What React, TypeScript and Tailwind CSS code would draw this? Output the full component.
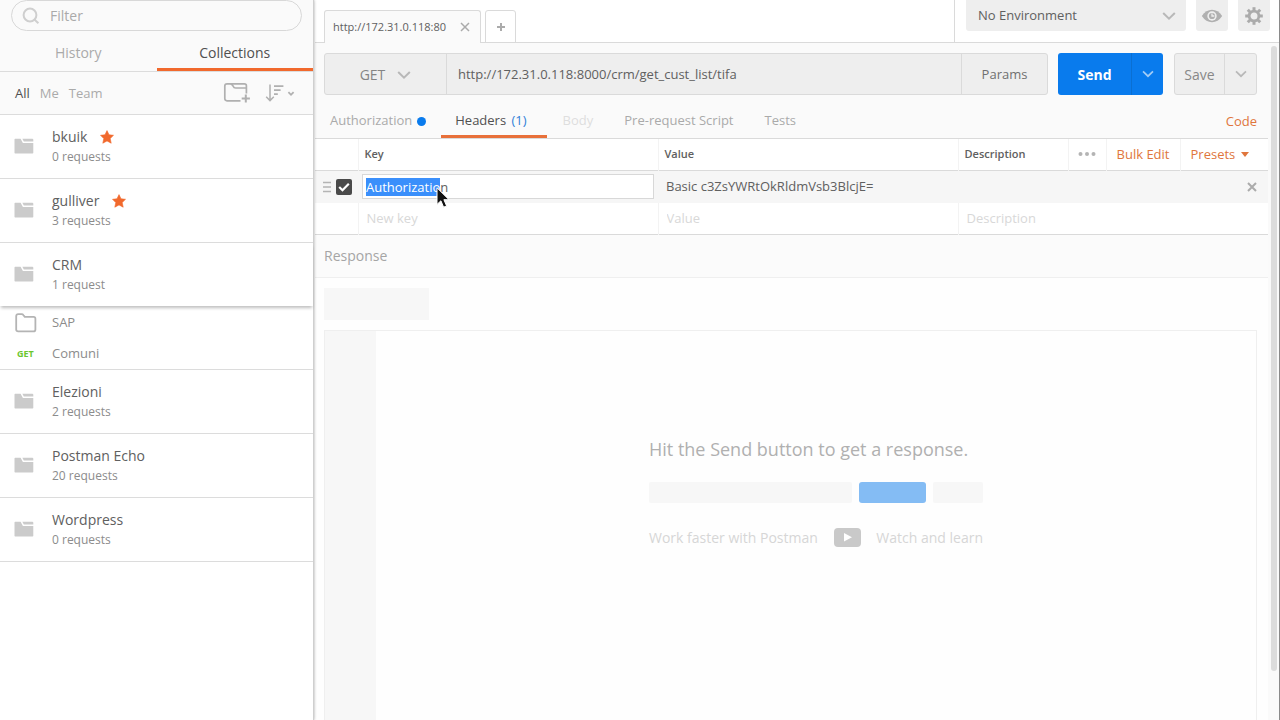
import { useEffect, useRef, type ReactNode } from "react";

function Chevron({ className }: { className?: string }) {
  return (
    <svg viewBox="0 0 14 8" width="14" height="8" className={className} fill="none" stroke="currentColor" strokeWidth="2" aria-hidden="true">
      <path d="M1.2 1 7 6.6 12.8 1" />
    </svg>
  );
}

function CollectionIcon() {
  return (
    <svg viewBox="0 0 20 16" width="20" height="16" className="mb-[2px]" fill="#cbcbcb" aria-hidden="true">
      <path d="M.5 1.5Q.5.8 1.2.8H6.6L8.9 5H19.3V14.8Q19.3 15.5 18.6 15.5H1.2Q.5 15.5.5 14.8Z" />
      <path d="M8.4.8H18.4Q19.3.8 19.3 1.7V3.4H9.8Z" />
    </svg>
  );
}

function FolderIcon() {
  return (
    <svg viewBox="0 0 22 20" width="22" height="20" fill="none" stroke="#b4b4b4" strokeWidth="1.8" strokeLinejoin="round" aria-hidden="true">
      <path d="M3.2 1.2H6.6Q7.8 1.2 8.5 2.2L9.8 3.9H18.6Q20.4 3.9 20.4 5.7V16.4Q20.4 18.4 18.4 18.4H3.2Q1.2 18.4 1.2 16.4V3.2Q1.2 1.2 3.2 1.2Z" />
    </svg>
  );
}

function NewFolderIcon() {
  return (
    <svg viewBox="0 0 28 22" width="28" height="22" fill="none" stroke="#b0b0b0" strokeWidth="1.7" aria-hidden="true">
      <path d="M17.5 18.8H4Q1.8 18.8 1.8 16.6V4Q1.8 1.8 4 1.8H21.4Q23.4 1.8 23.4 3.8V11.4" />
      <path d="M7.6 1.9Q9.6 2.4 10.2 4.2Q10.8 6 12.6 6H23" />
      <path d="M22.8 12.4V20.6M18.7 16.5H26.9" strokeWidth="2" />
    </svg>
  );
}

function SortIcon() {
  return (
    <svg viewBox="0 0 30 20" width="30" height="20" fill="none" stroke="#b0b0b0" strokeWidth="1.5" aria-hidden="true">
      <path d="M5 1.5V17.6M1.2 13.8 5 17.6 8.8 13.8" />
      <path d="M9 3.2H18.4M9 7.2H15.6M9 11.2H12.8" strokeWidth="1.8" />
      <path d="M23.4 9.2 26 11.8 28.6 9.2" strokeWidth="1.8" />
    </svg>
  );
}

function Star() {
  return (
    <svg viewBox="0 0 14 14" width="14" height="14" fill="#f1692d" stroke="#f1692d" strokeWidth=".6" strokeLinejoin="round" aria-label="Favorite" role="img">
      <path d="M7 .6 9 4.8 13.5 5.3 10.2 8.6 11.2 13.2 7 10.9 2.8 13.2 3.8 8.6.5 5.3 5 4.8Z" />
    </svg>
  );
}

function EyeIcon() {
  return (
    <svg viewBox="0 0 22 14" width="22" height="14" aria-hidden="true">
      <path d="M.8 7Q5 .8 11 .8T21.2 7Q17 13.2 11 13.2T.8 7Z" fill="#b0b0b0" />
      <circle cx="11" cy="7" r="4.7" fill="#eee" />
      <circle cx="11" cy="7" r="3.1" fill="#b0b0b0" />
      <path d="M11 4.6V7H13.4" stroke="#eee" strokeWidth="1.3" fill="none" />
    </svg>
  );
}

const TEETH = [0, 45, 90, 135, 180, 225, 270, 315];

function GearIcon() {
  return (
    <svg viewBox="0 0 18 18" width="18" height="18" fill="none" stroke="#ababab" aria-hidden="true">
      <circle cx="9" cy="9" r="4.9" strokeWidth="2.8" />
      {TEETH.map((a) => (
        <path key={a} d="M9 3.4V.2" strokeWidth="3" transform={`rotate(${a} 9 9)`} />
      ))}
    </svg>
  );
}

function Collection({ name, count, starred, open, children }: { name: string; count: string; starred?: boolean; open?: boolean; children?: ReactNode }) {
  return (
    <li className="border-b border-[#dcdcdc]">
      <div className={open ? "flex h-[63px] items-center pl-[14px] shadow-[0_3px_3px_-1px_rgba(0,0,0,0.25)]" : "flex h-[63px] items-center pl-[14px]"}>
        <CollectionIcon />
        <div className="ml-[18px]">
          <div className="flex h-5 items-center gap-[13px] text-sm text-[#606060]">
            {name}
            {starred && <Star />}
          </div>
          <div className="h-5 text-xs leading-5 text-[#8c8c8c]">{count}</div>
        </div>
      </div>
      {children}
    </li>
  );
}

function Sidebar() {
  return (
    <aside className="z-10 flex w-[314px] shrink-0 flex-col border-r border-[#cfcfcf] bg-white shadow-[0_0_3px_rgba(0,0,0,0.3)]">
      <div className="bg-[#fafafa]">
        <label className="mr-[11px] ml-[11px] flex h-[31px] items-center gap-[10px] rounded-full border border-[#d8d8d8] pl-[10px]">
          <svg viewBox="0 0 18 18" width="18" height="18" fill="none" stroke="#cfcfcf" strokeWidth="2" aria-hidden="true">
            <circle cx="8" cy="8" r="6.4" />
            <path d="M12.4 12.4 16.4 16.2" />
          </svg>
          <input aria-label="Filter" placeholder="Filter" className="min-w-0 flex-1 bg-transparent text-sm outline-none placeholder:text-[#aaa]" />
        </label>
        <div role="tablist" className="flex h-[41px] border-b border-[#dcdcdc] text-sm">
          <button role="tab" aria-selected="false" className="flex-1 border-b-3 border-transparent pt-[6px] text-[#aaa]">History</button>
          <button role="tab" aria-selected="true" className="flex-1 border-b-3 border-[#f1692d] pt-[6px] text-[#505050]">Collections</button>
        </div>
        <div className="flex h-[43px] items-center border-b border-[#dcdcdc] pr-[18px] pl-[15px] text-[13px] text-[#aaa]">
          <div className="flex gap-[10px] pt-px">
            <button className="text-[#505050]">All</button>
            <button>Me</button>
            <button>Team</button>
          </div>
          <div className="ml-auto flex items-center gap-[14px]">
            <button aria-label="New collection"><NewFolderIcon /></button>
            <button aria-label="Sort collections"><SortIcon /></button>
          </div>
        </div>
      </div>
      <ul>
        <Collection name="bkuik" count="0 requests" starred />
        <Collection name="gulliver" count="3 requests" starred />
        <Collection name="CRM" count="1 request" open>
          <ul className="pt-px text-[13px] text-[#8c8c8c]">
            <li className="flex h-[31px] items-center pl-[15px]">
              <FolderIcon />
              <span className="ml-[15px]">SAP</span>
            </li>
            <li className="flex h-[31px] items-center pl-[17px]">
              <span className="w-[35px] text-[9px] font-bold text-[#6bc72f]">GET</span>
              Comuni
            </li>
          </ul>
        </Collection>
        <Collection name="Elezioni" count="2 requests" />
        <Collection name="Postman Echo" count="20 requests" />
        <Collection name="Wordpress" count="0 requests" />
      </ul>
    </aside>
  );
}

function TopBar() {
  return (
    <header className="flex h-[43px] shrink-0 border-b border-[#dadada] bg-white">
      <div className="flex flex-1 items-end gap-1 border-r border-[#dadada] pl-[9px]">
        <div className="-mb-px flex h-[33px] w-[157px] items-center rounded-t-[3px] border border-b-0 border-[#dadada] bg-[#fafafa] pr-2 pl-2 text-[11px] text-[#606060]">
          <span className="w-[116px] overflow-hidden whitespace-nowrap">http://172.31.0.118:80</span>
          <button aria-label="Close tab" className="ml-auto p-[2px] text-[#ababab]">
            <svg viewBox="0 0 10 10" width="10" height="10" stroke="currentColor" strokeWidth="1.5" aria-hidden="true"><path d="M1 1 9 9M9 1 1 9" /></svg>
          </button>
        </div>
        <button aria-label="New tab" className="-mb-px flex h-[33px] w-[31px] items-center justify-center rounded-t-[3px] border border-[#dadada] text-[#ababab]">
          <svg viewBox="0 0 10 10" width="10" height="10" stroke="currentColor" strokeWidth="2" aria-hidden="true"><path d="M5 1V9M1 5H9" /></svg>
        </button>
      </div>
      <div className="flex h-[31px] gap-[10px] pr-[9px] pl-[11px]">
        <div className="grid w-[220px] items-center rounded-b-[3px] bg-[#eee]">
          <select aria-label="Environment" className="col-start-1 row-start-1 h-full appearance-none pl-3 text-[13px] text-[#606060] outline-none">
            <option>No Environment</option>
          </select>
          <Chevron className="pointer-events-none col-start-1 row-start-1 mr-[10px] justify-self-end text-[#b8b8b8]" />
        </div>
        <button aria-label="Environment quick look" className="flex w-8 items-center justify-center rounded-b-[3px] bg-[#eee]"><EyeIcon /></button>
        <button aria-label="Manage environments" className="flex w-8 items-center justify-center rounded-b-[3px] bg-[#eee]"><GearIcon /></button>
      </div>
    </header>
  );
}

function RequestBar() {
  return (
    <div className="flex h-[42px] pr-[11px] pl-[9px]">
      <div className="flex flex-1 overflow-hidden rounded-[3px] border border-[#dadada] bg-[#eee]">
        <button className="flex w-[122px] items-center justify-center gap-3 border-r border-[#dadada] pt-px text-sm font-medium text-[#848484]">
          GET
          <Chevron className="text-[#b8b8b8]" />
        </button>
        <input aria-label="Request URL" defaultValue="http://172.31.0.118:8000/crm/get_cust_list/tifa" className="min-w-0 flex-1 px-[11px] pt-px text-[13px] text-[#606060] outline-none" />
        <button className="w-[86px] border-l border-[#dadada] pt-px text-[13px] text-[#707070]">Params</button>
      </div>
      <div className="ml-[10px] flex w-[105px] overflow-hidden rounded-[3px] bg-[#097bed] text-white">
        <button className="flex-1 pt-px text-sm font-bold">Send</button>
        <button aria-label="Send options" className="flex w-8 items-center justify-center border-l border-[#0a6fd2]"><Chevron className="w-3 text-[#a3ccf5]" /></button>
      </div>
      <div className="ml-[11px] flex w-[83px] overflow-hidden rounded-[3px] border border-[#dadada] bg-[#eee]">
        <button className="flex-1 pt-px text-sm font-medium text-[#888]">Save</button>
        <button aria-label="Save options" className="flex w-8 items-center justify-center border-l border-[#dadada]"><Chevron className="w-3 text-[#b8b8b8]" /></button>
      </div>
    </div>
  );
}

function RequestTabs() {
  return (
    <div className="flex h-[44px] border-b border-[#dadada] pr-[11px] text-[13px] text-[#aaa]">
      <div role="tablist" className="flex flex-1">
        <button role="tab" aria-selected="false" className="flex items-center gap-[5px] px-[15px] pt-3 pb-[3px]">
          Authorization
          <span className="size-[9px] rounded-full bg-[#097bed]" />
        </button>
        <button role="tab" aria-selected="true" className="border-b-3 border-[#e8703a] pt-3 pr-5 pl-[14px] text-[#505050]">
          Headers <span className="ml-[2px] text-[#2f80d8]">(1)</span>
        </button>
        <button role="tab" aria-selected="false" disabled className="px-4 pt-3 pb-[3px] text-[#dedede]">Body</button>
        <button role="tab" aria-selected="false" className="px-[15px] pt-3 pb-[3px]">Pre-request Script</button>
        <button role="tab" aria-selected="false" className="px-4 pt-3 pb-[3px]">Tests</button>
      </div>
      <button className="pt-[10px] text-[#e0763c]">Code</button>
    </div>
  );
}

function HeadersTable() {
  const keyInput = useRef<HTMLInputElement>(null);
  useEffect(() => {
    keyInput.current?.focus();
    keyInput.current?.setSelectionRange(0, 12);
  }, []);
  return (
    <table className="w-full table-fixed border-b border-[#dadada] bg-white text-left text-[13px] text-[#606060]">
      <colgroup>
        <col className="w-[43px]" />
        <col />
        <col />
        <col className="w-[110px]" />
        <col className="w-[38px]" />
        <col className="w-[74px]" />
        <col className="w-[88px]" />
      </colgroup>
      <thead>
        <tr className="h-[31px] border-b border-[#dadada] text-[11px]">
          <td className="border-r border-[#f3f3f3]" />
          <th className="border-r border-[#f3f3f3] pl-[6px] font-semibold">Key</th>
          <th className="border-r border-[#f3f3f3] pl-[6px] font-semibold">Value</th>
          <th className="border-r border-[#f3f3f3] pl-[6px] font-semibold">Description</th>
          <td className="border-r border-[#f3f3f3]">
            <button aria-label="Columns" className="flex w-full justify-center">
              <svg viewBox="0 0 18 4" width="18" height="4" fill="#b4b4b4" aria-hidden="true"><circle cx="2.5" cy="2" r="2" /><circle cx="9" cy="2" r="2" /><circle cx="15.5" cy="2" r="2" /></svg>
            </button>
          </td>
          <td className="border-r border-[#f3f3f3] text-center"><button className="text-[13px] whitespace-nowrap text-[#e0763c]">Bulk Edit</button></td>
          <td className="pl-[10px]">
            <button className="flex items-center gap-[6px] text-[13px] text-[#e0763c]">
              Presets
              <svg viewBox="0 0 8 5" width="8" height="5" fill="currentColor" aria-hidden="true"><path d="M0 0H8L4 5Z" /></svg>
            </button>
          </td>
        </tr>
      </thead>
      <tbody>
        <tr className="h-[33px] bg-[#f6f6f6]">
          <td>
            <div className="flex items-center gap-[5px] pl-2">
              <svg viewBox="0 0 8 12" width="8" height="12" stroke="#b4b4b4" strokeWidth="1.5" aria-hidden="true"><path d="M0 1.5H8M0 6H8M0 10.5H8" /></svg>
              <span className="grid size-4 place-items-center">
                <input type="checkbox" defaultChecked aria-label="Enable header" className="col-start-1 row-start-1 size-4 appearance-none rounded-[2px] bg-[#4a4a4a]" />
                <svg viewBox="0 0 12 10" width="12" height="10" fill="none" stroke="#fff" strokeWidth="2.2" className="pointer-events-none col-start-1 row-start-1" aria-hidden="true"><path d="M1.2 5 4.5 8.2 10.8 1.8" /></svg>
              </span>
            </div>
          </td>
          <td className="relative pr-1 pl-1">
            <input
              ref={keyInput}
              aria-label="Key"
              defaultValue="Authorization"
              className="block h-[25px] w-full border border-[#d8d8d8] bg-white pl-[3px] outline-none selection:bg-[#3a8ffb] selection:text-white"
            />
            <svg viewBox="0 0 14 22" width="14" height="22" className="pointer-events-none absolute top-4 left-[78px]" aria-hidden="true">
              <path d="M1 .8V17.4L4.9 13.8 7.6 20.2 10.6 18.9 7.9 12.7H13Z" fill="#111" stroke="#fff" strokeWidth="1" />
            </svg>
          </td>
          <td className="pl-1"><input aria-label="Value" defaultValue="Basic c3ZsYWRtOkRldmVsb3BlcjE=" className="block w-full pl-1 outline-none" /></td>
          <td colSpan={4}>
            <button aria-label="Remove header" className="mr-[11px] ml-auto block text-[#ababab]">
              <svg viewBox="0 0 10 10" width="10" height="10" stroke="currentColor" strokeWidth="2" aria-hidden="true"><path d="M1 1 9 9M9 1 1 9" /></svg>
            </button>
          </td>
        </tr>
        <tr className="h-[31px]">
          <td className="border-r border-[#f3f3f3]" />
          <td className="border-r border-[#f3f3f3] pl-1"><input aria-label="New key" placeholder="New key" className="block w-full pl-1 outline-none placeholder:text-[#d8d8d8]" /></td>
          <td className="border-r border-[#f3f3f3] pl-1"><input aria-label="New value" placeholder="Value" className="block w-full pl-1 outline-none placeholder:text-[#d8d8d8]" /></td>
          <td colSpan={4} className="pl-1"><input aria-label="New description" placeholder="Description" className="block w-full pl-1 outline-none placeholder:text-[#d8d8d8]" /></td>
        </tr>
      </tbody>
    </table>
  );
}

function ResponsePanel() {
  return (
    <section className="flex min-h-0 flex-1 flex-col bg-[#fefefe]">
      <h2 className="h-[43px] shrink-0 border-b border-[#efefef] bg-[#fbfbfb] pl-[9px] text-sm leading-[42px] text-[#a5a5a5]">Response</h2>
      <div className="mt-[10px] ml-[9px] h-8 w-[105px] shrink-0 bg-[#f7f7f7]" />
      <div className="mt-[10px] mr-[11px] ml-[9px] flex min-h-0 flex-1 border border-b-0 border-[#efefef]">
        <div className="w-[51px] bg-[#f7f7f7]" />
        <div className="flex flex-1 flex-col items-center pt-[104px]">
          <div className="w-[334px]">
            <p className="text-lg leading-7 whitespace-nowrap text-[#b0b0b0]">Hit the Send button to get a response.</p>
            <div className="mt-[19px] flex h-[21px] gap-[7px]">
              <div className="flex-1 rounded-[2px] bg-[#f7f7f7]" />
              <div className="w-[67px] rounded-[3px] bg-[#84bcf4]" />
              <div className="w-[50px] rounded-[2px] bg-[#f7f7f7]" />
            </div>
            <p className="mt-[25px] flex items-center justify-between text-sm whitespace-nowrap text-[#d6d6d6]">
              Work faster with Postman
              <svg viewBox="0 0 27 19" width="27" height="19" aria-hidden="true"><rect width="27" height="19" rx="4" fill="#c9c9c9" /><path d="M10 5V13.5L18 9.2Z" fill="#fff" /></svg>
              <a href="#learn">Watch and learn</a>
            </p>
          </div>
        </div>
      </div>
    </section>
  );
}

export default function App() {
  return (
    <div className="flex h-screen overflow-hidden border-r border-[#8a8a8a] bg-[#fafafa] font-['Open_Sans',sans-serif]">
      <Sidebar />
      <div className="flex min-w-0 flex-1 flex-col pl-px">
        <TopBar />
        <main className="flex min-h-0 flex-1">
          <div className="flex min-w-0 flex-1 flex-col pt-[10px]">
            <RequestBar />
            <RequestTabs />
            <HeadersTable />
            <ResponsePanel />
          </div>
          <div className="w-[11px] pt-[3px] pr-[2px] pl-[3px]">
            <div className="h-[625px] rounded-full bg-[#dcdcdc]" />
          </div>
        </main>
      </div>
    </div>
  );
}
